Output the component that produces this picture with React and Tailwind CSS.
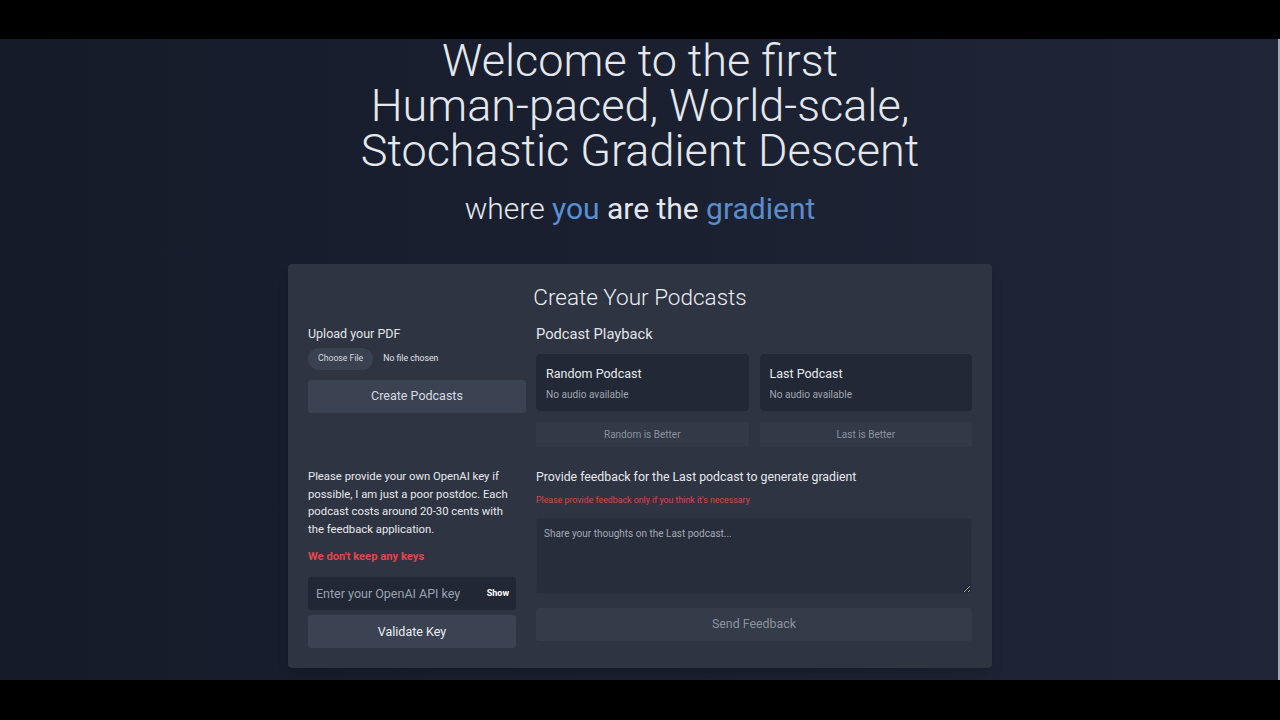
export default function App() {
  return (
    <div
      className="flex h-screen w-full flex-col bg-black text-[#e6e8ec]"
      style={{ fontFamily: "Roboto, 'Noto Sans', sans-serif" }}
    >
      <div className="h-[39px] shrink-0 bg-black" />

      <main className="flex h-[641px] shrink-0 flex-col items-center border-r-2 border-[#a3a8b1] bg-gradient-to-r from-[#151b29] via-[#1a2030] to-[#1f2637] pl-[2px]">
        <h1 className="-mt-[1px] text-center text-[45px] font-light leading-[45px] text-[#e4e7ec]">
          Welcome to the first
          <br />
          Human-paced, World-scale,
          <br />
          Stochastic Gradient Descent
        </h1>

        <p className="mt-[18px] text-center text-[30px] font-light leading-[36px] text-[#e4e7ec]">
          where <span className="font-normal text-[#5a8fd4]">you</span>{" "}
          <span className="font-normal">are the</span>{" "}
          <span className="font-normal text-[#5b8cc9]">gradient</span>
        </p>

        <section className="mt-[37px] w-[704px] rounded-[4px] bg-[#2e3442] px-5 pb-5 pt-5 shadow-lg">
          <h2 className="text-center text-[22.5px] font-light leading-[26px] text-[#eceef2]">
            Create Your Podcasts
          </h2>

          <div className="mt-[14px] flex gap-[10px]">
            {/* left column: upload + api key */}
            <div className="flex w-[218px] shrink-0 flex-col pt-[1px]">
              <div className="text-[12.5px] leading-[18px] text-[#e2e5ea]">Upload your PDF</div>
              <div className="mt-[5px] flex items-center gap-[10px]">
                <span className="flex h-[22px] items-center rounded-full bg-[#3a4150] px-[10px] text-[8.7px] text-[#d5d9df]">
                  Choose File
                </span>
                <span className="text-[8.7px] text-[#e2e5ea]">No file chosen</span>
              </div>
              <button className="mt-[10px] h-[33px] w-full rounded-[3px] bg-[#3b4252] text-[12.5px] text-[#d7dbe1]">
                Create Podcasts
              </button>

              <div className="mr-[10px] mt-[55px] flex flex-col">
                <p className="text-[11.3px] leading-[17.6px] text-[#e6e8ec]">
                  Please provide your own OpenAI key if possible, I am just a poor postdoc. Each
                  podcast costs around 20-30 cents with the feedback application.
                </p>
                <p className="mt-[10px] text-[11.2px] font-bold leading-[18px] text-[#e0474c]">
                  We don't keep any keys
                </p>
                <div className="mt-[11px] flex h-[33px] items-center justify-between rounded-[3px] bg-[#212735] pl-[8px] pr-[7px]">
                  <span className="text-[12.5px] text-[#9ba2ad]">Enter your OpenAI API key</span>
                  <span className="text-[9px] font-bold text-white">Show</span>
                </div>
                <button className="mt-[5px] h-[33px] w-full rounded-[3px] bg-[#3b4252] text-[12.5px] text-[#eceef2]">
                  Validate Key
                </button>
              </div>
            </div>

            {/* right column: playback + feedback */}
            <div className="flex w-[436px] flex-col">
              <div className="text-[14.7px] leading-[20px] text-[#e2e5ea]">Podcast Playback</div>

              <div className="mt-[10px] grid grid-cols-2 gap-x-[11px]">
                {["Random Podcast", "Last Podcast"].map((name) => (
                  <div key={name} className="h-[57px] rounded-[4px] bg-[#222836] px-[10px] pt-[11px]">
                    <div className="text-[12.5px] leading-[18px] text-[#e6e8ec]">{name}</div>
                    <div className="mt-[4px] text-[10.1px] leading-[15px] text-[#a0a6b0]">
                      No audio available
                    </div>
                  </div>
                ))}
              </div>

              <div className="mt-[11px] grid grid-cols-2 gap-x-[11px]">
                <button className="h-[25px] rounded-[2px] bg-[#323947] text-[10px] text-[#8c939f]">
                  Random is Better
                </button>
                <button className="h-[25px] rounded-[2px] bg-[#323947] text-[10px] text-[#8c939f]">
                  Last is Better
                </button>
              </div>

              <div className="mt-[21px] text-[12.3px] leading-[18px] text-[#e6e8ec]">
                Provide feedback for the Last podcast to generate gradient
              </div>
              <div className="mt-[8px] text-[8.8px] leading-[13px] text-[#d9484e]">
                Please provide feedback only if you think it's necessary
              </div>
              <textarea
                className="mt-[11px] h-[76px] w-full resize-y rounded-[3px] border border-[#2a3140] bg-[#272d3b] px-[7px] py-[7px] text-[10px] text-[#e6e8ec] outline-none placeholder:text-[#a3a9b3]"
                placeholder="Share your thoughts on the Last podcast..."
              />
              <button className="mt-[14px] h-[33px] w-full rounded-[3px] bg-[#343b49] text-[12.4px] text-[#8c939f]">
                Send Feedback
              </button>
            </div>
          </div>
        </section>
      </main>

      <div className="flex-1 bg-black" />
    </div>
  )
}
